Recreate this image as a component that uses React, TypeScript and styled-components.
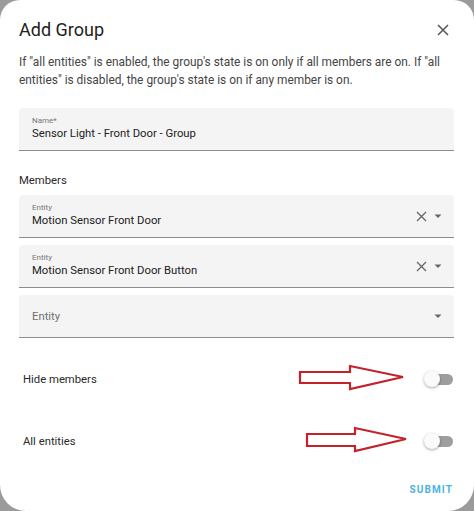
import styled, { createGlobalStyle } from "styled-components";

const GlobalStyle = createGlobalStyle`
    html, body {
        margin: 0;
        padding: 0;
        background: #9b9b9b;
    }
    body {
        font-family: Roboto, "Liberation Sans", sans-serif;
        -webkit-font-smoothing: antialiased;
    }
`;

const Dialog = styled.div`
    position: relative;
    width: 474px;
    height: 511px;
    box-sizing: border-box;
    background: #fff;
    border-radius: 20px 20px 26px 26px;
    overflow: hidden;
    display: flex;
    flex-direction: column;
`;

const Header = styled.div`
    height: 22px;
    display: flex;
    align-items: center;
    justify-content: space-between;
    padding: 19px 20px 0 19px;
`;

const Title = styled.h2`
    margin: 0;
    font-size: 18px;
    line-height: 22px;
    font-weight: 400;
    color: #212121;
`;

const CloseBtn = styled.button`
    width: 22px;
    height: 22px;
    padding: 0;
    border: none;
    background: none;
    display: flex;
    align-items: center;
    justify-content: center;
    cursor: pointer;
`;

const Content = styled.div`
    padding: 0 20px 0 19px;
    display: flex;
    flex-direction: column;
`;

const Description = styled.p`
    margin: 13px 0 0;
    font-size: 11.9px;
    line-height: 17.5px;
    color: #454545;
`;

const Field = styled.div<{ $gap: number }>`
    margin-top: ${(p) => p.$gap}px;
    height: 43px;
    box-sizing: border-box;
    background: #f4f4f4;
    border-bottom: 1px solid #8e8e8e;
    border-radius: 4px 4px 0 0;
    padding: 0 10px 0 13px;
    display: flex;
    align-items: center;
`;

const FieldText = styled.div`
    flex: 1;
    display: flex;
    flex-direction: column;
    padding-bottom: 2px;
`;

const FieldLabel = styled.span`
    font-size: 8px;
    line-height: 10px;
    color: #767676;
`;

const FieldValue = styled.span`
    font-size: 11.3px;
    line-height: 15px;
    color: #212121;
`;

const Placeholder = styled.span`
    flex: 1;
    font-size: 11.3px;
    color: #6f6f6f;
`;

const FieldIcons = styled.div`
    display: flex;
    align-items: center;
    gap: 5px;
`;

const SectionLabel = styled.div`
    margin-top: 21px;
    font-size: 11.3px;
    line-height: 18px;
    color: #2a2a2a;
`;

const ToggleList = styled.div`
    margin-top: 10px;
    display: flex;
    flex-direction: column;
`;

const ToggleRow = styled.div`
    position: relative;
    height: 62px;
    display: flex;
    align-items: center;
    justify-content: space-between;
    padding-left: 4px;
`;

const ToggleLabel = styled.span`
    font-size: 11.3px;
    color: #2a2a2a;
`;

const Switch = styled.div`
    position: relative;
    width: 25px;
    height: 11px;
    margin-right: 1px;
    border-radius: 6px;
    background: #9e9e9e;

    &::after {
        content: "";
        position: absolute;
        left: -4px;
        top: -3px;
        width: 16px;
        height: 16px;
        border-radius: 50%;
        background: #fafafa;
        box-shadow: 0 1px 3px rgba(0, 0, 0, 0.35);
    }
`;

const Annotation = styled.svg<{ $left: number; $top: number }>`
    position: absolute;
    left: ${(p) => p.$left}px;
    top: ${(p) => p.$top}px;
    overflow: visible;
`;

const Footer = styled.div`
    margin-top: auto;
    height: 28px;
    padding: 11px 21px 0 19px;
    display: flex;
    align-items: flex-start;
    justify-content: flex-end;
`;

const SubmitBtn = styled.button`
    border: none;
    background: none;
    padding: 0;
    font-family: inherit;
    font-size: 10px;
    line-height: 14px;
    font-weight: 700;
    letter-spacing: 1.1px;
    color: #4cb4de;
    cursor: pointer;
`;

const ClearIcon = () => (
    <svg width="11" height="11" viewBox="0 0 11 11">
        <path d="M1 1L10 10M10 1L1 10" stroke="#666" strokeWidth="1.3" fill="none" />
    </svg>
);

const DropIcon = () => (
    <svg width="12" height="12" viewBox="0 0 12 12">
        <path d="M2.5 4.5h7L6 8z" fill="#666" />
    </svg>
);

// hand drawn red arrow, points from left to the switch
const RedArrow = ({ left, top, tail, shaftTop, shaftBottom, neck, headTop, headBottom, tip, tipY }: {
    left: number;
    top: number;
    tail: number;
    shaftTop: number;
    shaftBottom: number;
    neck: number;
    headTop: number;
    headBottom: number;
    tip: number;
    tipY: number;
}) => (
    <Annotation $left={left} $top={top} width="1" height="1">
        <path
            d={`M${tail} ${shaftTop}L${neck} ${shaftTop}L${neck} ${headTop}L${tip} ${tipY}L${neck} ${headBottom}L${neck} ${shaftBottom}L${tail} ${shaftBottom}Z`}
            fill="none"
            stroke="#c4222b"
            strokeWidth="2.2"
            strokeLinejoin="miter"
        />
    </Annotation>
);

const EntityField = ({ value, gap }: { value?: string; gap: number }) => (
    <Field $gap={gap}>
        {value ? (
            <FieldText>
                <FieldLabel>Entity</FieldLabel>
                <FieldValue>{value}</FieldValue>
            </FieldText>
        ) : (
            <Placeholder>Entity</Placeholder>
        )}
        <FieldIcons>
            {value && <ClearIcon />}
            <DropIcon />
        </FieldIcons>
    </Field>
);

const App = () => {
    return (
        <>
            <GlobalStyle />
            <Dialog>
                <Header>
                    <Title>Add Group</Title>
                    <CloseBtn aria-label="close">
                        <svg width="12" height="12" viewBox="0 0 12 12">
                            <path d="M1 1L11 11M11 1L1 11" stroke="#555" strokeWidth="1.5" fill="none" />
                        </svg>
                    </CloseBtn>
                </Header>
                <Content>
                    <Description>
                        If "all entities" is enabled, the group's state is on only if all members are on. If "all
                        entities" is disabled, the group's state is on if any member is on.
                    </Description>

                    <Field $gap={19}>
                        <FieldText>
                            <FieldLabel>Name*</FieldLabel>
                            <FieldValue>Sensor Light - Front Door - Group</FieldValue>
                        </FieldText>
                    </Field>

                    <SectionLabel>Members</SectionLabel>
                    <EntityField gap={5} value="Motion Sensor Front Door" />
                    <EntityField gap={7} value="Motion Sensor Front Door Button" />
                    <EntityField gap={7} />

                    <ToggleList>
                        <ToggleRow>
                            <ToggleLabel>Hide members</ToggleLabel>
                            <RedArrow left={281} top={0} tail={0} shaftTop={24} shaftBottom={35} neck={50} headTop={18} headBottom={41} tip={103} tipY={29} />
                            <Switch />
                        </ToggleRow>
                        <ToggleRow>
                            <ToggleLabel>All entities</ToggleLabel>
                            <RedArrow left={288} top={0} tail={0} shaftTop={24} shaftBottom={36} neck={48} headTop={18} headBottom={41} tip={99} tipY={29} />
                            <Switch />
                        </ToggleRow>
                    </ToggleList>
                </Content>
                <Footer>
                    <SubmitBtn>SUBMIT</SubmitBtn>
                </Footer>
            </Dialog>
        </>
    );
};

export default App;
